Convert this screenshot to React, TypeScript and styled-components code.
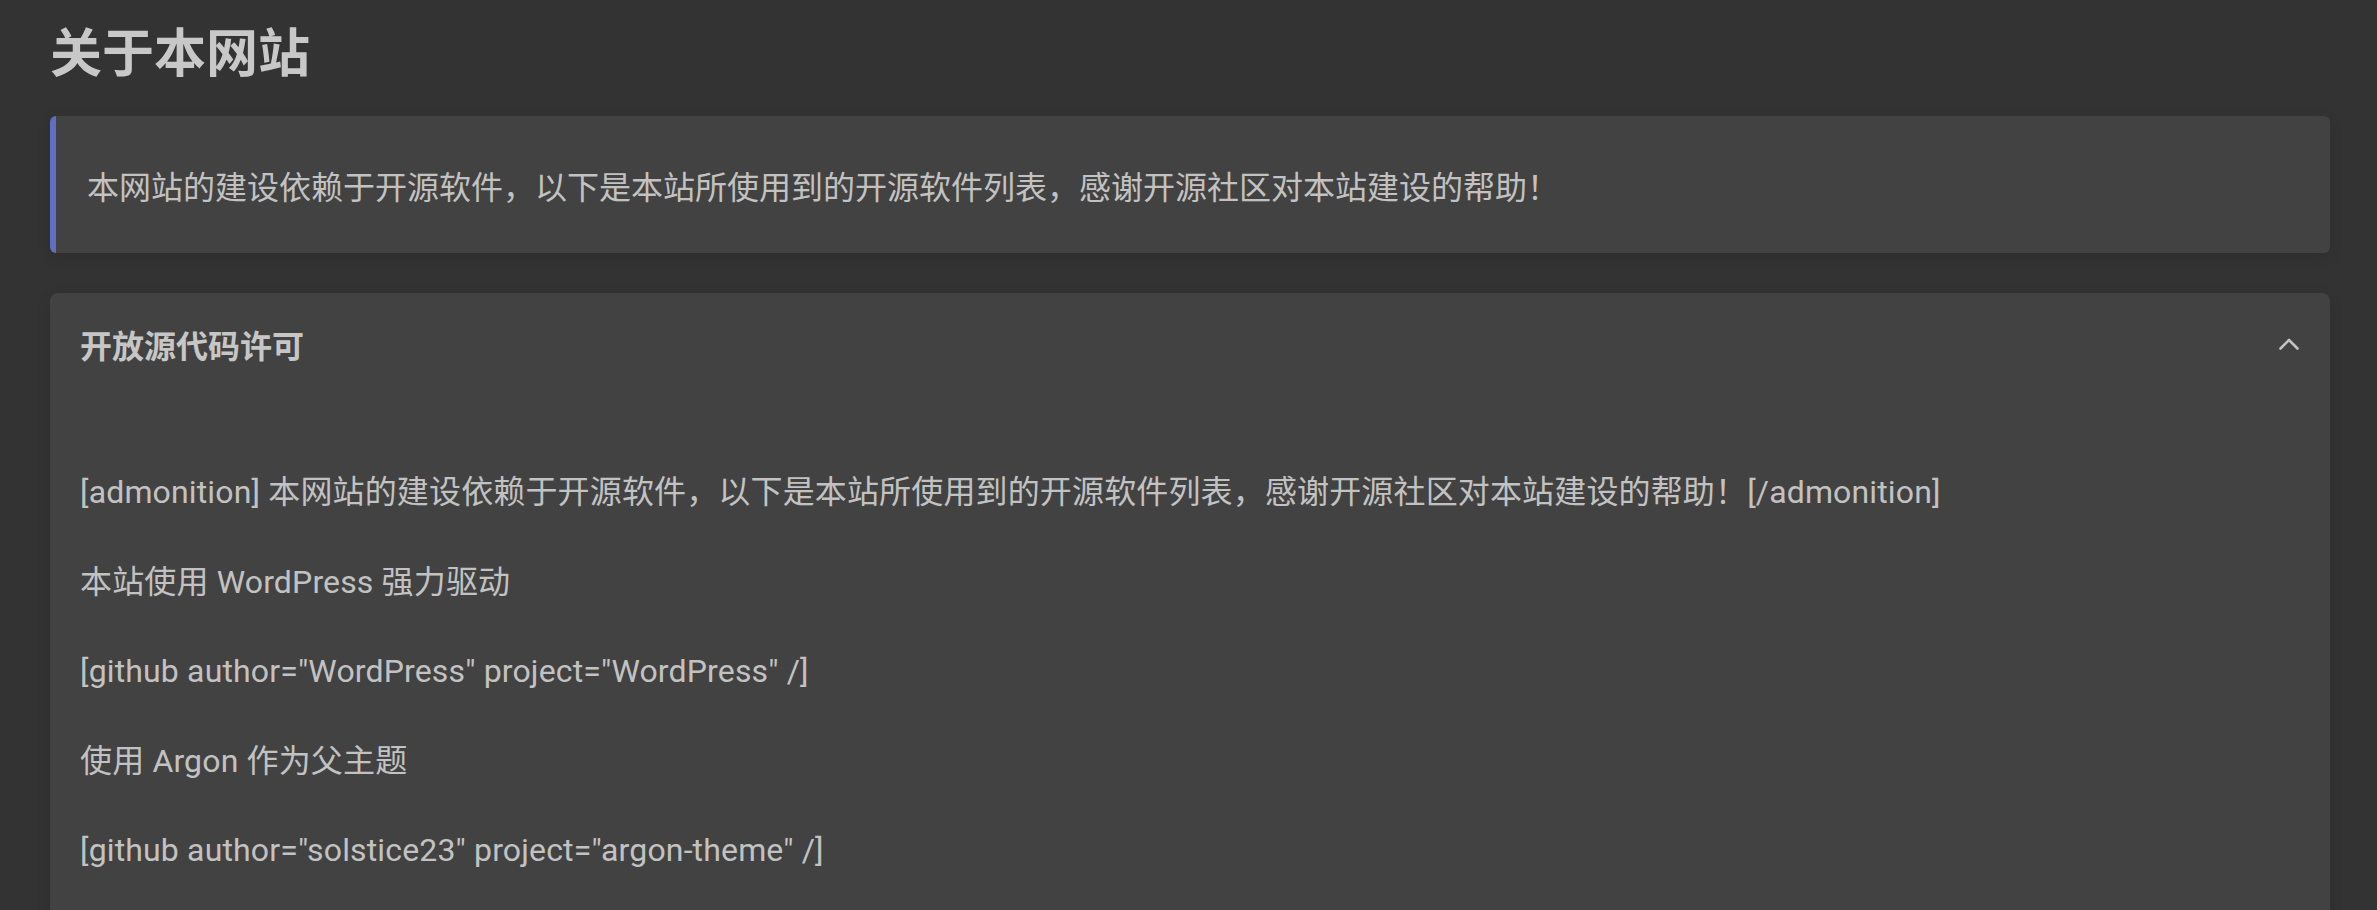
import * as React from 'react';
import styled, { createGlobalStyle } from 'styled-components';

const GlobalStyle = createGlobalStyle`
  html, body {
    margin: 0;
    padding: 0;
    background: #333333;
  }
  body {
    font-family: Roboto, "Noto Sans CJK SC", sans-serif;
    color: #c2c2c2;
  }
`;

const Page = styled.div`
  padding: 19px 47px 0 50px;
  overflow: hidden;
  height: 910px;
  box-sizing: border-box;
`;

const Title = styled.h1`
  margin: 0;
  font-size: 52px;
  line-height: 62px;
  font-weight: 700;
  color: #c8c8c8;
  font-family: "Noto Sans CJK SC", sans-serif;
`;

const Callout = styled.div`
  margin-top: 35px;
  box-sizing: border-box;
  height: 137px;
  display: flex;
  align-items: center;
  padding: 0 32px 0 31px;
  background: #424242;
  border-left: 6px solid #5e6fc4;
  border-radius: 6px;
  box-shadow: 0 4px 14px rgba(0, 0, 0, 0.12);
  font-size: 32px;
  color: #c2c2c2;
`;

const Card = styled.section`
  margin-top: 40px;
  background: #424242;
  border-radius: 8px;
  box-shadow: 0 4px 14px rgba(0, 0, 0, 0.12);
  padding: 0 30px;
`;

const CardHeader = styled.div`
  display: flex;
  align-items: center;
  justify-content: space-between;
  height: 102px;
`;

const CardTitle = styled.h2`
  margin: 0;
  font-size: 32px;
  font-weight: 700;
  color: #c6c6c6;
  font-family: "Noto Sans CJK SC", sans-serif;
`;

const Toggle = styled.span`
  display: flex;
  margin-right: 1px;
  color: #c2c2c2;
`;

const CardBody = styled.div`
  padding: 69px 0 80px;
`;

const Para = styled.p`
  margin: 0 0 32px;
  font-size: 32px;
  line-height: 57.6px;
  letter-spacing: 0.15px;
  color: #c2c2c2;
`;

const ChevronUp = () => (
  <svg width="20" height="12" viewBox="0 0 20 12" fill="none">
    <polyline points="1.5,10.5 10,2 18.5,10.5" stroke="currentColor" strokeWidth="2.6" strokeLinecap="round" strokeLinejoin="round" />
  </svg>
);

const lines = [
  '[admonition] 本网站的建设依赖于开源软件，以下是本站所使用到的开源软件列表，感谢开源社区对本站建设的帮助！[/admonition]',
  '本站使用 WordPress 强力驱动',
  '[github author="WordPress" project="WordPress" /]',
  '使用 Argon 作为父主题',
  '[github author="solstice23" project="argon-theme" /]',
];

export default function App() {
  return (
    <>
      <GlobalStyle />
      <Page>
        <Title>关于本网站</Title>
        <Callout>本网站的建设依赖于开源软件，以下是本站所使用到的开源软件列表，感谢开源社区对本站建设的帮助！</Callout>
        <Card>
          <CardHeader>
            <CardTitle>开放源代码许可</CardTitle>
            <Toggle>
              <ChevronUp />
            </Toggle>
          </CardHeader>
          <CardBody>
            {lines.map((l, i) => (
              <Para key={i}>{l}</Para>
            ))}
          </CardBody>
        </Card>
      </Page>
    </>
  );
}
